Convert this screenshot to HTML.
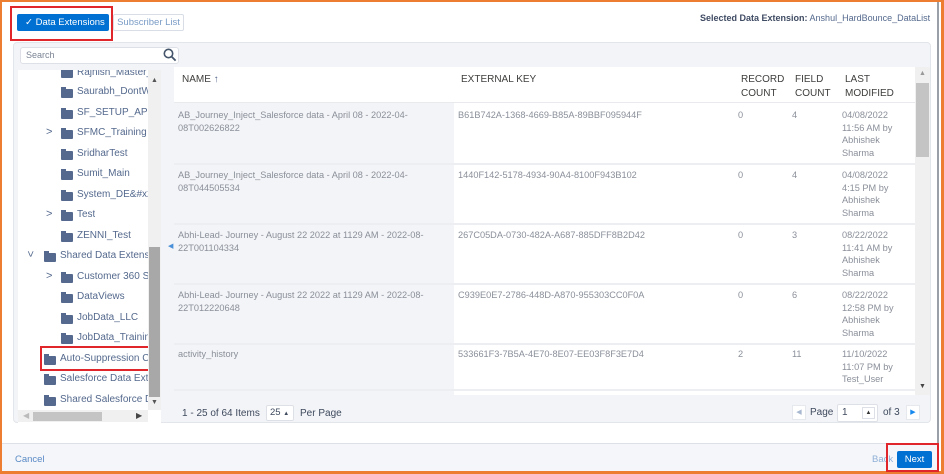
<!DOCTYPE html>
<html><head><meta charset="utf-8"><style>
*{box-sizing:border-box;margin:0;padding:0}
body{width:944px;height:474px;overflow:hidden;background:#fff;font-family:"Liberation Sans",sans-serif;position:relative}
.a{position:absolute}
.tr{font-size:10px;color:#54698d;white-space:nowrap;overflow:hidden}
.fold{position:absolute;width:12px;height:9px;background:#54698d;border-radius:1px}
.fold:before{content:"";position:absolute;left:0;top:-2px;width:5px;height:3px;background:#54698d}
.chev{position:absolute;font-size:11px;color:#54698d}
.cell{position:absolute;font-size:9.2px;color:#8a8f99;line-height:12.5px}
.hd{position:absolute;font-size:10px;color:#3e3e3c;line-height:14px}
</style></head><body>
<div class="a" style="left:0;top:0;width:944px;height:474px;border:2px solid #ed7d31;border-bottom-width:3px;border-right-width:3px"></div>
<div class="a" style="left:937px;top:2px;width:2px;height:469px;background:#9aa0a8"></div>
<div class="a" style="left:17px;top:14px;width:92px;height:17px;background:#0070d2;border-radius:2px;color:#fff;font-size:9.5px;line-height:17px;padding-left:8px">✓ Data Extensions</div>
<div class="a" style="left:10px;top:6px;width:103px;height:35px;border:2px solid #e0262b"></div>
<div class="a" style="left:113px;top:14px;width:71px;height:17px;border:1px solid #d8dde6;border-radius:2px;color:#7a9cc6;font-size:9.5px;line-height:15px;text-align:center">Subscriber List</div>
<div class="a" style="left:700px;top:13px;font-size:9px;color:#54698d;white-space:nowrap"><b style="color:#3f4b63">Selected Data Extension:</b> Anshul_HardBounce_DataList</div>
<div class="a" style="left:13px;top:42px;width:918px;height:381px;background:#f3f4f7;border:1px solid #e2e5ea;border-radius:4px"></div>
<div class="a" style="left:20px;top:47px;width:159px;height:17px;background:#fff;border:1px solid #dde1e7;border-radius:3px;font-size:9px;color:#7b8594;line-height:15px;padding-left:5px">Search</div>
<svg class="a" style="left:163px;top:48px" width="14" height="14" viewBox="0 0 14 14"><circle cx="5.5" cy="5.5" r="4.2" fill="none" stroke="#44546a" stroke-width="1.6"/><path d="M8.6 8.6L12.6 12.6" stroke="#44546a" stroke-width="1.8"/></svg>
<div class="a" style="left:18px;top:70px;width:143px;height:353px;background:#fff"></div>
<div class="a" style="left:18px;top:70px;width:130px;height:340px;overflow:hidden">
<div style="position:relative">
<div class="fold" style="left:43px;top:-1px"></div><div class="tr a" style="left:59px;top:-3px">Rajnish_Master_D</div>
<div class="fold" style="left:43px;top:19px"></div><div class="tr a" style="left:59px;top:16px">Saurabh_DontWo</div>
<div class="fold" style="left:43px;top:40px"></div><div class="tr a" style="left:59px;top:37px">SF_SETUP_APP</div>
<div class="chev" style="left:28px;top:56px">&gt;</div><div class="fold" style="left:43px;top:60px"></div><div class="tr a" style="left:59px;top:57px">SFMC_Training</div>
<div class="fold" style="left:43px;top:81px"></div><div class="tr a" style="left:59px;top:78px">SridharTest</div>
<div class="fold" style="left:43px;top:101px"></div><div class="tr a" style="left:59px;top:98px">Sumit_Main</div>
<div class="fold" style="left:43px;top:122px"></div><div class="tr a" style="left:59px;top:119px">System_DE&amp;#x27;</div>
<div class="chev" style="left:28px;top:138px">&gt;</div><div class="fold" style="left:43px;top:142px"></div><div class="tr a" style="left:59px;top:139px">Test</div>
<div class="fold" style="left:43px;top:163px"></div><div class="tr a" style="left:59px;top:160px">ZENNI_Test</div>
<div class="chev" style="left:9px;top:178px;transform:rotate(90deg)">&gt;</div><div class="fold" style="left:26px;top:183px"></div><div class="tr a" style="left:42px;top:180px">Shared Data Extensions</div>
<div class="chev" style="left:28px;top:200px">&gt;</div><div class="fold" style="left:43px;top:204px"></div><div class="tr a" style="left:59px;top:201px">Customer 360 Se</div>
<div class="fold" style="left:43px;top:224px"></div><div class="tr a" style="left:59px;top:221px">DataViews</div>
<div class="fold" style="left:43px;top:245px"></div><div class="tr a" style="left:59px;top:242px">JobData_LLC</div>
<div class="fold" style="left:43px;top:265px"></div><div class="tr a" style="left:59px;top:262px">JobData_Training</div>
<div class="fold" style="left:26px;top:286px"></div><div class="tr a" style="left:42px;top:283px">Auto-Suppression Configuration</div>
<div class="fold" style="left:26px;top:306px"></div><div class="tr a" style="left:42px;top:303px">Salesforce Data Extensions</div>
<div class="fold" style="left:26px;top:327px"></div><div class="tr a" style="left:42px;top:324px">Shared Salesforce Data</div>
</div></div>
<div class="a" style="left:40px;top:346px;width:113px;height:25px;border:2px solid #e0262b"></div>
<div class="a" style="left:148px;top:70px;width:13px;height:340px;background:#f0f0f0"></div>
<div class="a" style="left:149px;top:247px;width:11px;height:150px;background:#a8a8a8"></div>
<div class="a" style="left:151px;top:77px;font-size:7px;color:#555">▲</div>
<div class="a" style="left:151px;top:399px;font-size:7px;color:#555">▼</div>
<div class="a" style="left:18px;top:410px;width:130px;height:12px;background:#f0f0f0"></div>
<div class="a" style="left:33px;top:412px;width:69px;height:9px;background:#c4c4c4"></div>
<div class="a" style="left:136px;top:411px;font-size:8px;color:#444">▶</div>
<div class="a" style="left:23px;top:411px;font-size:8px;color:#bbb">◀</div>
<div class="a" style="left:168px;top:242px;font-size:7px;color:#4a90d9">◀</div>
<div class="a" style="left:174px;top:67px;width:742px;height:328px;background:#fff;overflow:hidden">
 <div class="a" style="left:0;top:36px;width:280px;height:300px;background:#f3f4f7"></div>
 <div class="a" style="left:0;top:35px;width:742px;height:1px;background:#e8eaee"></div>
 <div class="a" style="left:0;top:96px;width:742px;height:2px;background:#eceef2"></div>
 <div class="a" style="left:0;top:156px;width:742px;height:2px;background:#eceef2"></div>
 <div class="a" style="left:0;top:216px;width:742px;height:2px;background:#eceef2"></div>
 <div class="a" style="left:0;top:276px;width:742px;height:2px;background:#eceef2"></div>
 <div class="a" style="left:0;top:322px;width:742px;height:2px;background:#eceef2"></div>
</div>
<div class="hd" style="left:182px;top:73px">NAME <span style="color:#54698d">↑</span></div>
<div class="hd" style="left:461px;top:73px">EXTERNAL KEY</div>
<div class="hd" style="left:741px;top:73px">RECORD<br>COUNT</div>
<div class="hd" style="left:795px;top:73px">FIELD<br>COUNT</div>
<div class="hd" style="left:845px;top:73px">LAST<br>MODIFIED</div>

<div class="cell" style="left:178px;top:109px">AB_Journey_Inject_Salesforce data - April 08 - 2022-04-<br>08T002626822</div>
<div class="cell" style="left:458px;top:109px">B61B742A-1368-4669-B85A-89BBF095944F</div>
<div class="cell" style="left:738px;top:109px">0</div><div class="cell" style="left:792px;top:109px">4</div>
<div class="cell" style="left:842px;top:109px">04/08/2022<br>11:56 AM by<br>Abhishek<br>Sharma</div>

<div class="cell" style="left:178px;top:169px">AB_Journey_Inject_Salesforce data - April 08 - 2022-04-<br>08T044505534</div>
<div class="cell" style="left:458px;top:169px">1440F142-5178-4934-90A4-8100F943B102</div>
<div class="cell" style="left:738px;top:169px">0</div><div class="cell" style="left:792px;top:169px">4</div>
<div class="cell" style="left:842px;top:169px">04/08/2022<br>4:15 PM by<br>Abhishek<br>Sharma</div>

<div class="cell" style="left:178px;top:229px">Abhi-Lead- Journey - August 22 2022 at 1129 AM - 2022-08-<br>22T001104334</div>
<div class="cell" style="left:458px;top:229px">267C05DA-0730-482A-A687-885DFF8B2D42</div>
<div class="cell" style="left:738px;top:229px">0</div><div class="cell" style="left:792px;top:229px">3</div>
<div class="cell" style="left:842px;top:229px">08/22/2022<br>11:41 AM by<br>Abhishek<br>Sharma</div>

<div class="cell" style="left:178px;top:289px">Abhi-Lead- Journey - August 22 2022 at 1129 AM - 2022-08-<br>22T012220648</div>
<div class="cell" style="left:458px;top:289px">C939E0E7-2786-448D-A870-955303CC0F0A</div>
<div class="cell" style="left:738px;top:289px">0</div><div class="cell" style="left:792px;top:289px">6</div>
<div class="cell" style="left:842px;top:289px">08/22/2022<br>12:58 PM by<br>Abhishek<br>Sharma</div>

<div class="cell" style="left:178px;top:348px">activity_history</div>
<div class="cell" style="left:458px;top:348px">533661F3-7B5A-4E70-8E07-EE03F8F3E7D4</div>
<div class="cell" style="left:738px;top:348px">2</div><div class="cell" style="left:792px;top:348px">11</div>
<div class="cell" style="left:842px;top:348px">11/10/2022<br>11:07 PM by<br>Test_User</div>

<div class="a" style="left:915px;top:67px;width:15px;height:328px;background:#f0f0f0"></div>
<div class="a" style="left:916px;top:83px;width:13px;height:74px;background:#c4c4c4"></div>
<div class="a" style="left:919px;top:70px;font-size:7px;color:#999">▲</div>
<div class="a" style="left:919px;top:383px;font-size:7px;color:#444">▼</div>
<div class="a" style="left:182px;top:408px;font-size:10px;color:#3e4a5e">1 - 25 of 64 Items</div>
<div class="a" style="left:266px;top:405px;width:28px;height:16px;background:#fff;border:1px solid #dde1e7;border-radius:2px;font-size:9.5px;color:#3e4a5e;line-height:14px;padding-left:3px">25 <span style="font-size:6px">▲</span></div>
<div class="a" style="left:300px;top:408px;font-size:10px;color:#3e4a5e">Per Page</div>
<div class="a" style="left:792px;top:405px;width:14px;height:15px;background:#fff;border:1px solid #e5e8ec;font-size:7px;color:#a8b8d0;text-align:center;line-height:13px">◀</div>
<div class="a" style="left:810px;top:407px;font-size:10px;color:#3e4a5e">Page</div>
<div class="a" style="left:837px;top:404px;width:41px;height:18px;background:#fff;border:1px solid #dde1e7;border-radius:2px;font-size:10px;color:#3e4a5e;line-height:16px;padding-left:4px">1</div>
<div class="a" style="left:862px;top:407px;width:13px;height:12px;border:1px solid #dde1e7;font-size:6px;text-align:center;line-height:10px;color:#333">▲</div>
<div class="a" style="left:883px;top:407px;font-size:10px;color:#3e4a5e">of 3</div>
<div class="a" style="left:906px;top:405px;width:14px;height:15px;background:#fff;border:1px solid #e5e8ec;font-size:7px;color:#1589ee;text-align:center;line-height:13px">▶</div>
<div class="a" style="left:2px;top:443px;width:935px;height:28px;background:#f4f6f9;border-top:1px solid #dde1e7"></div>
<div class="a" style="left:15px;top:454px;font-size:9.5px;color:#5a8ac6">Cancel</div>
<div class="a" style="left:872px;top:454px;font-size:9.5px;color:#8fb0d8">Back</div>
<div class="a" style="left:897px;top:451px;width:35px;height:17px;background:#0070d2;border-radius:2px;color:#fff;font-size:9.5px;line-height:17px;text-align:center">Next</div>
<div class="a" style="left:886px;top:443px;width:53px;height:29px;border:2px solid #e0262b"></div>
</body></html>
